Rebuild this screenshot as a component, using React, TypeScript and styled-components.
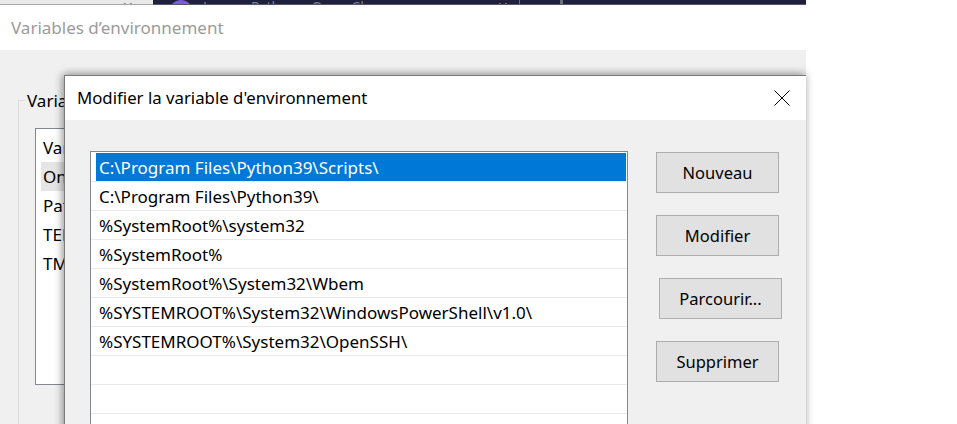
import styled, { createGlobalStyle } from "styled-components";

const GlobalStyle = createGlobalStyle`
  html, body {
    margin: 0;
    padding: 0;
    background: #ffffff;
    overflow: hidden;
  }
  body {
    font-family: "Noto Sans", "Open Sans", sans-serif;
    color: #000000;
  }
`;

const Screen = styled.div`
  position: relative;
  width: 957px;
  height: 424px;
  overflow: hidden;
  display: flex;
  background: #ffffff;
`;

const BackWindow = styled.div`
  width: 806px;
  height: 424px;
  display: flex;
  flex-direction: column;
`;

const TabStrip = styled.div`
  height: 5px;
  display: flex;
  overflow: hidden;
  flex-shrink: 0;
`;

const Tab = styled.div<{ $dark?: boolean; $width?: number }>`
  display: flex;
  align-items: flex-end;
  gap: 10px;
  box-sizing: border-box;
  height: 5px;
  ${(p) => (p.$width ? `width: ${p.$width}px;` : "flex: 1;")}
  background: ${(p) => (p.$dark ? "#1f203d" : "#e9e9e9")};
  border-bottom: 1px solid ${(p) => (p.$dark ? "#55566a" : "#a8a8a8")};
  color: ${(p) => (p.$dark ? "#7f8096" : "#777")};
  font-size: 14px;
  line-height: 14px;
  padding-left: 16px;
  overflow: hidden;

  span {
    margin-bottom: -10px;
    white-space: nowrap;
  }
`;

const TabIcon = styled.div`
  width: 24px;
  height: 24px;
  border-radius: 50%;
  background: #7b5cdc;
  margin-bottom: -20px;
  flex-shrink: 0;
`;

const TabSep = styled.div<{ $w: number }>`
  width: ${(p) => p.$w}px;
  height: 5px;
  background: #6d6e82;
  flex-shrink: 0;
`;

const TitleBar = styled.div<{ $h: number }>`
  height: ${(p) => p.$h}px;
  flex-shrink: 0;
  display: flex;
  align-items: center;
  background: #ffffff;
`;

const BackTitle = styled.div`
  padding-left: 11px;
  font-size: 17px;
  color: #9b9b9b;
`;

const BackBody = styled.div`
  flex: 1;
  background: #f0f0f0;
  padding: 50px 0 0 18px;
`;

const GroupBox = styled.div`
  position: relative;
  border-top: 1px solid #dcdcdc;
  border-left: 1px solid #dcdcdc;
  height: 400px;
  padding: 27px 0 0 16px;
`;

const GroupLabel = styled.div`
  position: absolute;
  left: 6px;
  top: -12px;
  padding: 0 2px;
  background: #f0f0f0;
  font-size: 17px;
`;

const BackList = styled.div`
  width: 700px;
  height: 257px;
  background: #ffffff;
  border: 1px solid #828790;
  padding: 4px 0 0 5px;
  box-sizing: border-box;
  font-size: 17px;
`;

const BackRow = styled.div<{ $selected?: boolean }>`
  height: 29px;
  display: flex;
  align-items: center;
  padding-left: 2px;
  background: ${(p) => (p.$selected ? "#e5e5e5" : "transparent")};
`;

const Dialog = styled.div`
  position: absolute;
  left: 64px;
  top: 75px;
  width: 742px;
  height: 380px;
  box-sizing: border-box;
  border: 1px solid #7a7a7a;
  border-right: none;
  background: #f0f0f0;
  display: flex;
  flex-direction: column;
  box-shadow: -2px 0 8px rgba(0, 0, 0, 0.28), 0 -2px 8px rgba(0, 0, 0, 0.2);
`;

const DialogTitle = styled.div`
  flex: 1;
  padding-left: 12px;
  font-size: 16.8px;
  margin-top: -1px;
`;

const CloseButton = styled.div`
  width: 44px;
  height: 44px;
  display: flex;
  align-items: center;
  justify-content: center;
  margin-right: 2px;
`;

const DialogBody = styled.div`
  flex: 1;
  display: flex;
  align-items: flex-start;
  padding: 31px 0 0 25px;
  gap: 28px;
`;

const PathList = styled.div`
  width: 538px;
  height: 300px;
  box-sizing: border-box;
  background: #ffffff;
  border: 1px solid #828790;
  padding-top: 1px;
  font-size: 17px;
`;

const PathRow = styled.div`
  height: 29px;
  box-sizing: border-box;
  border-bottom: 1px solid #e9e9e9;
  display: flex;
`;

const PathCell = styled.div<{ $selected?: boolean }>`
  flex: 1;
  margin: 0 1px 0 5px;
  padding-left: 3px;
  display: flex;
  align-items: center;
  white-space: nowrap;
  background: ${(p) => (p.$selected ? "#0078d7" : "transparent")};
  color: ${(p) => (p.$selected ? "#ffffff" : "#000000")};
`;

const ButtonColumn = styled.div`
  display: flex;
  flex-direction: column;
  gap: 22px;
  padding-top: 1px;
`;

const Button = styled.button<{ $shift?: number }>`
  width: 123px;
  height: 41px;
  box-sizing: border-box;
  margin-left: ${(p) => p.$shift ?? 0}px;
  background: #e1e1e1;
  border: 1px solid #adadad;
  font-family: "Noto Sans", "Open Sans", sans-serif;
  font-size: 16.5px;
  color: #000000;
  padding: 0;
`;

const paths = [
  "C:\\Program Files\\Python39\\Scripts\\",
  "C:\\Program Files\\Python39\\",
  "%SystemRoot%\\system32",
  "%SystemRoot%",
  "%SystemRoot%\\System32\\Wbem",
  "%SYSTEMROOT%\\System32\\WindowsPowerShell\\v1.0\\",
  "%SYSTEMROOT%\\System32\\OpenSSH\\",
  "",
  "",
  "",
];

const backRows = ["Variable", "OneDrive", "Path", "TEMP", "TMP"];

export default function App() {
  return (
    <Screen>
      <GlobalStyle />
      <BackWindow>
        <TabStrip>
          <Tab $width={153}>
            <span style={{ marginLeft: 106 }}>✕</span>
          </Tab>
          <Tab $dark>
            <TabIcon />
            <span>Lancer Python – Open Classrooms</span>
            <span style={{ marginLeft: 60 }}>✕</span>
            <TabSep $w={1} />
            <span style={{ width: 20 }} />
            <TabSep $w={3} />
          </Tab>
        </TabStrip>
        <TitleBar $h={45}>
          <BackTitle>Variables d’environnement</BackTitle>
        </TitleBar>
        <BackBody>
          <GroupBox>
            <GroupLabel>Variables utilisateur pour Admin</GroupLabel>
            <BackList>
              {backRows.map((r, i) => (
                <BackRow key={r} $selected={i === 1}>
                  {r}
                </BackRow>
              ))}
            </BackList>
          </GroupBox>
        </BackBody>
      </BackWindow>

      <Dialog>
        <TitleBar $h={44}>
          <DialogTitle>Modifier la variable d'environnement</DialogTitle>
          <CloseButton>
            <svg width="16" height="16" viewBox="0 0 16 16">
              <path d="M0.5 0.5 L15.5 15.5 M15.5 0.5 L0.5 15.5" stroke="#000" strokeWidth="1" fill="none" />
            </svg>
          </CloseButton>
        </TitleBar>
        <DialogBody>
          <PathList>
            {paths.map((p, i) => (
              <PathRow key={i}>
                <PathCell $selected={i === 0}>{p}</PathCell>
              </PathRow>
            ))}
          </PathList>
          <ButtonColumn>
            <Button>Nouveau</Button>
            <Button>Modifier</Button>
            <Button $shift={3}>Parcourir...</Button>
            <Button>Supprimer</Button>
          </ButtonColumn>
        </DialogBody>
      </Dialog>
    </Screen>
  );
}
